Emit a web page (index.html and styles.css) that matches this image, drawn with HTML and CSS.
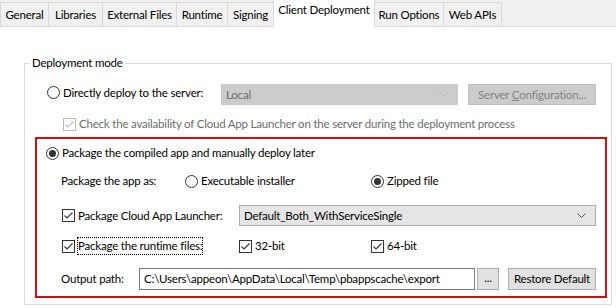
FILE: index.html
```html
<!DOCTYPE html>
<html>
<head>
    <title>Client Deployment</title>
    <meta charset="utf-8">
    <link rel="stylesheet" href="styles.css">
</head>
<body>
    <div class="tabs">
        <div class="tab" style="width: 49px">General</div>
        <div class="tab" style="width: 54px">Libraries</div>
        <div class="tab" style="width: 74px">External Files</div>
        <div class="tab" style="width: 51px">Runtime</div>
        <div class="tab" style="width: 46px">Signing</div>
        <div class="tab active" style="width: 102px">Client Deployment</div>
        <div class="tab" style="width: 69px">Run Options</div>
        <div class="tab" style="width: 58px">Web APIs</div>
    </div>

    <fieldset class="group">
        <legend>Deployment mode</legend>

        <div class="row row-server">
            <div class="option server-option">
                <span class="radio"></span>
                <span class="label">Directly deploy to the server:</span>
            </div>
            <div class="combo disabled server-combo">
                <span>Local</span>
                <svg class="chev" width="9" height="5" viewBox="0 0 9 5"><path d="M0.5 0.5 L4.5 4.5 L8.5 0.5" fill="none" stroke="#b4b4b4"/></svg>
            </div>
            <div class="button disabled server-btn">Server <u>C</u>onfiguration...</div>
        </div>

        <div class="row row-check">
            <span class="check disabled">
                <svg width="11" height="11" viewBox="0 0 11 11"><path d="M1.5 5.5 L4 8 L9.5 2.5" fill="none" stroke="#bcbcbc" stroke-width="1.1"/></svg>
            </span>
            <span class="label muted">Check the availability of Cloud App Launcher on the server during the deployment process</span>
        </div>

        <div class="package">
            <div class="row row-package">
                <span class="radio checked"></span>
                <span class="label">Package the compiled app and manually deploy later</span>
            </div>

            <div class="row row-as">
                <span class="label as-label">Package the app as:</span>
                <div class="option exe">
                    <span class="radio"></span>
                    <span class="label">Executable installer</span>
                </div>
                <div class="option">
                    <span class="radio checked"></span>
                    <span class="label">Zipped file</span>
                </div>
            </div>

            <div class="row row-launcher">
                <div class="option launcher">
                    <span class="check">
                        <svg width="11" height="11" viewBox="0 0 11 11"><path d="M1.5 5.5 L4 8 L9.5 2.5" fill="none" stroke="#333" stroke-width="1.1"/></svg>
                    </span>
                    <span class="label">Package Cloud App Launcher:</span>
                </div>
                <div class="combo launcher-combo">
                    <span>Default_Both_WithServiceSingle</span>
                    <svg class="chev" width="9" height="5" viewBox="0 0 9 5"><path d="M0.5 0.5 L4.5 4.5 L8.5 0.5" fill="none" stroke="#555"/></svg>
                </div>
            </div>

            <div class="row row-runtime">
                <div class="option launcher">
                    <span class="check">
                        <svg width="11" height="11" viewBox="0 0 11 11"><path d="M1.5 5.5 L4 8 L9.5 2.5" fill="none" stroke="#333" stroke-width="1.1"/></svg>
                    </span>
                    <span class="label focus">Package the runtime files:</span>
                </div>
                <div class="option bits32">
                    <span class="check">
                        <svg width="11" height="11" viewBox="0 0 11 11"><path d="M1.5 5.5 L4 8 L9.5 2.5" fill="none" stroke="#333" stroke-width="1.1"/></svg>
                    </span>
                    <span class="label">32-bit</span>
                </div>
                <div class="option">
                    <span class="check">
                        <svg width="11" height="11" viewBox="0 0 11 11"><path d="M1.5 5.5 L4 8 L9.5 2.5" fill="none" stroke="#333" stroke-width="1.1"/></svg>
                    </span>
                    <span class="label">64-bit</span>
                </div>
            </div>

            <div class="row row-output">
                <span class="label output-label">Output path:</span>
                <div class="textbox">C:\Users\appeon\AppData\Local\Temp\pbappscache\export</div>
                <div class="button dots">...</div>
                <div class="button restore">Restore Default</div>
            </div>
        </div>
    </fieldset>
</body>
</html>
```

FILE: styles.css
```css
body {
    margin: 0;
    width: 616px;
    height: 308px;
    background-color: #ffffff;
    font-family: Lato, "Liberation Sans", sans-serif;
    font-size: 11.5px;
    letter-spacing: -0.2px;
    color: #000000;
    overflow: hidden;
}

.tabs {
    display: flex;
    align-items: flex-end;
    height: 27px;
    background-color: #f0f0f0;
    border-bottom: 1px solid #d9d9d9;
    box-sizing: border-box;
}

.tab {
    box-sizing: border-box;
    height: 25px;
    margin-bottom: -1px;
    padding-top: 5px;
    text-align: center;
    background-color: #f0f0f0;
    border: 1px solid #d9d9d9;
    border-left: none;
    white-space: nowrap;
}

.tab:first-child {
    border-left: 1px solid #d9d9d9;
}

.tab.active {
    height: 28px;
    padding-top: 3px;
    background-color: #ffffff;
    border-bottom-color: #ffffff;
    border-left: 1px solid #d9d9d9;
    margin-left: -1px;
}

.group {
    margin: 28px 4px 0 24px;
    padding: 0 0 5px 5px;
    border: 1px solid #dcdcdc;
    height: 250px;
    box-sizing: border-box;
}

.group legend {
    padding: 0 2px;
    line-height: 16px;
}

.row {
    display: flex;
    align-items: center;
}

.label {
    white-space: nowrap;
    line-height: 16px;
}

.muted {
    color: #6d6d6d;
}

.radio {
    display: inline-block;
    box-sizing: border-box;
    width: 13px;
    height: 13px;
    border: 1px solid #333333;
    border-radius: 50%;
    background-color: #ffffff;
    margin-right: 3px;
    position: relative;
    flex: none;
}

.radio.checked::after {
    content: "";
    position: absolute;
    left: 2px;
    top: 2px;
    width: 7px;
    height: 7px;
    border-radius: 50%;
    background-color: #333333;
}

.check {
    display: inline-flex;
    align-items: center;
    justify-content: center;
    box-sizing: border-box;
    width: 13px;
    height: 13px;
    border: 1px solid #333333;
    background-color: #ffffff;
    margin-right: 3px;
    flex: none;
}

.check.disabled {
    border-color: #bcbcbc;
}

.combo {
    display: flex;
    align-items: center;
    justify-content: space-between;
    box-sizing: border-box;
    height: 21px;
    padding: 0 9px 0 4px;
    background-color: #e5e5e5;
    border: 1px solid #adadad;
}

.combo.disabled {
    background-color: #cccccc;
    border-color: #cccccc;
    color: #6d6d6d;
}

.button {
    box-sizing: border-box;
    height: 21px;
    line-height: 19px;
    text-align: center;
    background-color: #e1e1e1;
    border: 1px solid #adadad;
    white-space: nowrap;
}

.button.disabled {
    background-color: #cccccc;
    border-color: #bfbfbf;
    color: #838383;
}

.row-server {
    margin: 13px 0 0 17px;
    height: 21px;
}

.server-option {
    width: 174px;
    margin-bottom: 4px;
}

.server-combo {
    width: 237px;
}

.server-btn {
    width: 128px;
    margin-left: 10px;
}

.row-check {
    margin: 11px 0 0 33px;
    height: 16px;
}

.package {
    margin: 5px 4px 0 5px;
    border: 2px solid #d10f0f;
    height: 161px;
    box-sizing: border-box;
}

.row-package {
    margin: 6px 0 0 9px;
    height: 16px;
}

.row-as {
    margin: 12px 0 0 24px;
    height: 16px;
}

.as-label {
    width: 124px;
}

.option {
    display: flex;
    align-items: center;
}

.exe {
    width: 186px;
}

.row-launcher {
    margin: 16px 0 0 25px;
    height: 21px;
}

.launcher {
    width: 177px;
}

.launcher-combo {
    width: 357px;
}

.row-runtime {
    margin: 12px 0 0 25px;
    height: 16px;
}

.focus {
    outline: 1px dotted #000000;
    outline-offset: 0;
}

.bits32 {
    width: 132px;
}

.row-output {
    margin: 14px 0 0 24px;
    height: 22px;
}

.output-label {
    width: 78px;
}

.textbox {
    box-sizing: border-box;
    width: 336px;
    height: 22px;
    line-height: 20px;
    padding-left: 4px;
    border: 1px solid #7a7a7a;
    background-color: #ffffff;
    white-space: nowrap;
}

.dots {
    width: 22px;
    height: 22px;
    margin-left: 2px;
    line-height: 18px;
}

.restore {
    width: 88px;
    height: 22px;
    margin-left: 9px;
    line-height: 20px;
}
```
